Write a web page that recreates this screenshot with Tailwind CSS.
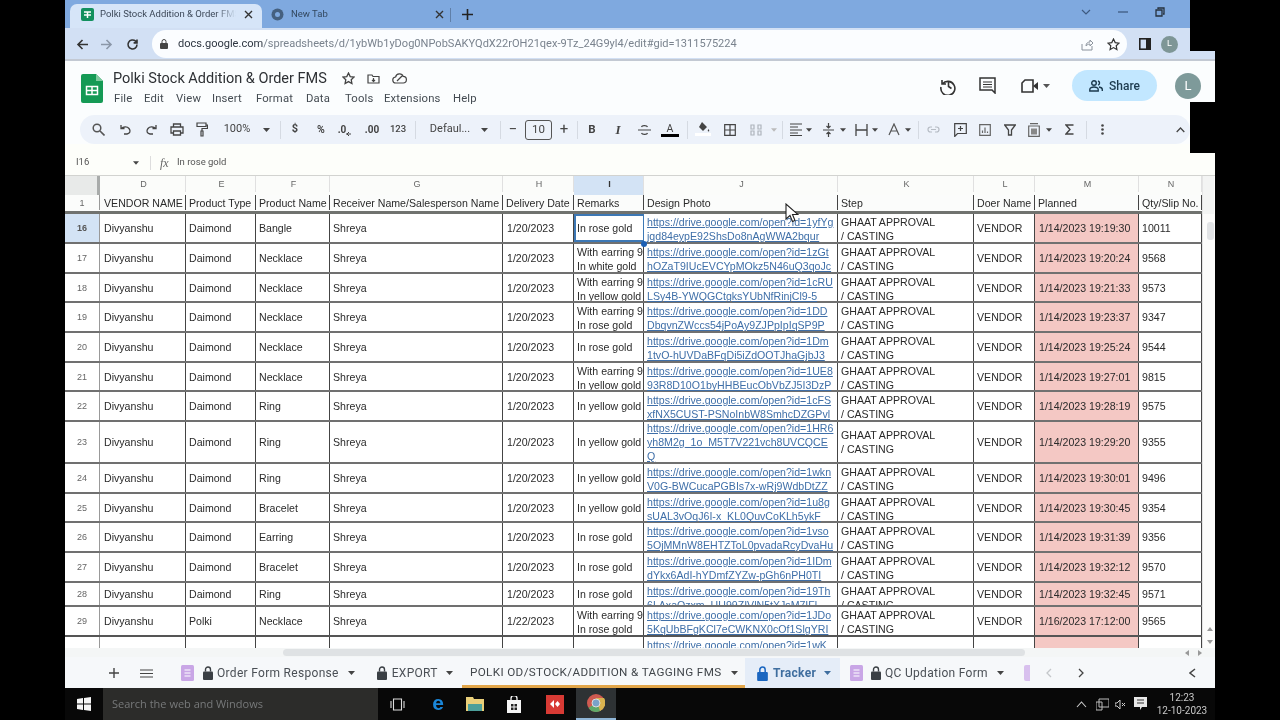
<!DOCTYPE html>
<html>
<head>
<meta charset="utf-8">
<script src="https://cdn.jsdelivr.net/npm/@tailwindcss/browser@4"></script>
</head>
<body class="bg-black">
<div class="relative w-[1280px] h-[720px] overflow-hidden bg-black font-['Liberation_Sans',sans-serif] blur-[0.6px]">
<div class="ml-[65px] w-[1150px] h-[720px] flex flex-col bg-[#fbfdfe]">

  <!-- tab strip -->
  <div class="h-[28px] bg-[#7fa9df] flex items-end pl-[5px] shrink-0 font-['Roboto',sans-serif]">
    <div class="w-[192px] h-[24px] pb-[3px] bg-[#d6e5f8] rounded-t-[7px] flex items-center pl-[11px] text-[9.5px] text-[#3c4858]">
      <svg class="w-[13px] h-[13px] shrink-0" viewBox="0 0 13 13"><rect width="13" height="13" rx="2" fill="#12905e"/><path d="M3 4h7M3 7h7M6.5 4v6" stroke="#fff" stroke-width="1.5"/></svg>
      <span class="ml-[6px] w-[136px] whitespace-nowrap overflow-hidden [mask-image:linear-gradient(to_right,black_85%,transparent)]">Polki Stock Addition &amp; Order FMS</span>
      <svg class="w-[9px] h-[9px] ml-[8px]" viewBox="0 0 9 9"><path d="M1 1l7 7M8 1l-7 7" stroke="#333" stroke-width="1.4"/></svg>
    </div>
    <div class="w-[215px] h-[24px] pb-[3px] flex items-center pl-[9px] text-[9.5px] text-[#33485f]">
      <svg class="w-[13px] h-[13px] shrink-0" viewBox="0 0 13 13"><circle cx="6.5" cy="6.5" r="6" fill="#45607f"/><circle cx="6.5" cy="6.5" r="2.5" fill="#7fa9df"/></svg>
      <span class="ml-[7px] w-[143px]">New Tab</span>
      <svg class="w-[9px] h-[9px] ml-[1px]" viewBox="0 0 9 9"><path d="M1 1l7 7M8 1l-7 7" stroke="#333" stroke-width="1.4"/></svg>
      <span class="w-px h-[14px] bg-[#5f7fa8] ml-[6px]"></span>
      <svg class="w-[11px] h-[11px] ml-[11px] shrink-0" viewBox="0 0 11 11"><path d="M5.500 0v11M0 5.500h11" stroke="#222" stroke-width="1.6"/></svg>
    </div>
    <div class="ml-auto mr-[50px] h-[28px] flex items-center gap-[27px] pb-[5px]">
      <svg class="w-[10px] h-[10px]" viewBox="0 0 10 10"><path d="M1 3l4 4 4-4" fill="none" stroke="#3e5a80" stroke-width="1.2"/></svg>
      <svg class="w-[10px] h-[10px]" viewBox="0 0 10 10"><path d="M0 5h10" stroke="#3e5a80" stroke-width="1.3"/></svg>
      <svg class="w-[10px] h-[10px]" viewBox="0 0 10 10"><path d="M3 2V1h6v6H8M1 3h6v6H1z" fill="none" stroke="#26303c" stroke-width="1.3"/></svg>
    </div>
  </div>

  <!-- address row -->
  <div class="h-[33px] pt-px bg-[#d2e0f4] border-b-2 border-[#c3c9d3] flex items-center pl-[11px] shrink-0">
    <svg class="w-[13px] h-[13px]" viewBox="0 0 13 13"><path d="M12 6.5H2M6.5 2L2 6.5 6.5 11" fill="none" stroke="#333" stroke-width="1.6"/></svg>
    <svg class="w-[13px] h-[13px] ml-[11px]" viewBox="0 0 13 13"><path d="M1 6.5h10M6.5 2L11 6.5 6.5 11" fill="none" stroke="#8b97a8" stroke-width="1.6"/></svg>
    <svg class="w-[13px] h-[13px] ml-[13px]" viewBox="0 0 13 13"><path d="M11 6.5A4.5 4.5 0 1 1 9.6 3.2L11 4.6M11 1.5v3.4H7.6" fill="none" stroke="#333" stroke-width="1.6"/></svg>
    <div class="ml-[13px] w-[975px] h-[28px] bg-[#fbfdff] rounded-full flex items-center pl-[8px] pr-[6px] font-['Roboto',sans-serif] text-[11.05px]">
      <svg class="w-[8px] h-[10px]" viewBox="0 0 8 10"><rect y="4" width="8" height="6" rx="1" fill="#444"/><path d="M2 4V2.5a2 2 0 0 1 4 0V4" fill="none" stroke="#444"/></svg>
      <span class="ml-[10px] text-[#2d3540]">docs.google.com<span class="text-[#7a838e]">/spreadsheets/d/1ybWb1yDog0NPobSAKYQdX22rOH21qex-9Tz_24G9yl4/edit#gid=1311575224</span></span>
      <svg class="w-[13px] h-[13px] ml-auto" viewBox="0 0 13 13"><path d="M1 6v6h10V8M5 8c0-3 2-4 4-4V2l3 3-3 3V6C7 6 6 7 5 8z" fill="none" stroke="#8a929c"/></svg>
      <svg class="w-[13px] h-[13px] ml-[13px] mr-[1px]" viewBox="0 0 13 13"><path d="M6.5 1l1.7 3.6 3.8.5-2.8 2.6.7 3.8-3.4-1.9-3.4 1.9.7-3.8L1 5.1l3.8-.5z" fill="none" stroke="#333" stroke-width="1.2"/></svg>
    </div>
    <svg class="w-[12px] h-[12px] ml-[12px]" viewBox="0 0 12 12"><rect x=".8" y=".8" width="10.4" height="10.4" fill="none" stroke="#222" stroke-width="1.6"/><rect x="7" y="1" width="4" height="10" fill="#222"/></svg>
    <div class="ml-[10px] w-[17px] h-[17px] rounded-full bg-[#7e9696] text-white text-[9px] flex items-center justify-center">L</div>
  </div>

  <!-- doc header -->
  <div class="h-[54px] flex items-center shrink-0 pl-[16px] font-['Roboto',sans-serif]">
    <svg class="w-[22px] h-[29px] shrink-0" viewBox="0 0 22 29"><path d="M2 0h13l7 7v20a2 2 0 0 1-2 2H2a2 2 0 0 1-2-2V2a2 2 0 0 1 2-2z" fill="#159a55"/><path d="M15 0l7 7h-7z" fill="#7fcb9f"/><rect x="5.5" y="12.5" width="11" height="8" fill="none" stroke="#fff" stroke-width="1.5"/><path d="M11 12.5v8M5.5 16.5h11" stroke="#fff" stroke-width="1.5"/></svg>
    <div class="ml-[10px] w-[340px]">
      <div class="flex items-center h-[20px] text-[14.5px] text-[#2d3034]">
        <span class="whitespace-nowrap w-[229px]">Polki Stock Addition &amp; Order FMS</span>
        <svg class="w-[13px] h-[13px]" viewBox="0 0 13 13"><path d="M6.5 1l1.7 3.6 3.8.5-2.8 2.6.7 3.8-3.4-1.9-3.4 1.9.7-3.8L1 5.1l3.8-.5z" fill="none" stroke="#444" stroke-width="1.3"/></svg>
        <svg class="w-[13px] h-[13px] ml-[12px]" viewBox="0 0 13 13"><path d="M1 3h4l1 1.5h6V11H1zM6.5 6v3.5M5 8l1.5 1.5L8 8" fill="none" stroke="#444" stroke-width="1.2"/></svg>
        <svg class="w-[15px] h-[13px] ml-[12px]" viewBox="0 0 15 13"><path d="M4 11a3 3 0 0 1-.4-6 4 4 0 0 1 7.6-.6A3.3 3.3 0 0 1 11 11zM5 9l5-5" fill="none" stroke="#444" stroke-width="1.2"/></svg>
      </div>
      <div class="mt-[2px] flex text-[11.3px] text-[#444b52] tracking-[0.15px] *:whitespace-nowrap *:shrink-0">
        <span class="w-[31px] pl-px">File</span><span class="w-[32px]">Edit</span><span class="w-[36px]">View</span><span class="w-[44px]">Insert</span><span class="w-[50px]">Format</span><span class="w-[39px]">Data</span><span class="w-[39px]">Tools</span><span class="w-[69px]">Extensions</span><span>Help</span>
      </div>
    </div>
    <div class="flex items-center mb-[5px]">
      <svg class="w-[18px] h-[18px] ml-[486px]" viewBox="0 0 18 18"><path d="M3 3v4h4M3.4 7A7 7 0 1 1 2 10" fill="none" stroke="#333" stroke-width="1.6"/><path d="M9.5 5v4.5l3 2" fill="none" stroke="#333" stroke-width="1.6"/></svg>
      <svg class="w-[17px] h-[17px] ml-[22px]" viewBox="0 0 17 17"><path d="M1 1h15v15l-3-3H1z" fill="none" stroke="#333" stroke-width="1.5"/><path d="M4 5h9M4 7.500h9M4 10h9" stroke="#333" stroke-width="1.200"/></svg>
      <svg class="w-[18px] h-[14px] ml-[25px]" viewBox="0 0 18 14"><path d="M2 3l2-2h8v12H1V4z" fill="none" stroke="#333" stroke-width="1.6"/><path d="M12 7l5-4v8z" fill="#333"/></svg>
      <svg class="w-[7px] h-[4px] ml-[4px]" viewBox="0 0 7 4"><path d="M0 0h7L3.500 4z" fill="#555"/></svg>
      <div class="ml-[22px] w-[85px] h-[31px] rounded-full bg-[#c2e7ff] flex items-center justify-center gap-[6px] text-[12px] font-medium text-[#1d3b4f]">
        <svg class="w-[14px] h-[12px]" viewBox="0 0 14 12"><circle cx="5" cy="3" r="2.300" fill="none" stroke="#1d3b4f" stroke-width="1.400"/><path d="M.8 11V9.500C.8 8 3 7 5 7s4.200 1 4.200 2.500V11zM9 1a2.200 2.200 0 0 1 0 4.200M10 7c2 .3 3.300 1.200 3.300 2.500V11" fill="none" stroke="#1d3b4f" stroke-width="1.400"/></svg>
        Share
      </div>
      <div class="ml-[18px] w-[26px] h-[26px] rounded-full bg-[#7e9a9a] text-white text-[13px] flex items-center justify-center">L</div>
    </div>
  </div>

  <!-- toolbar -->
  <div class="h-[29px] ml-[15px] w-[1110px] bg-[#edf2fa] rounded-full shrink-0 flex items-center pl-[5px] text-[#444] font-['Roboto',sans-serif] *:shrink-0 *:flex *:items-center *:justify-center">
    <div class="w-[26px]"><svg class="w-[13px] h-[13px]" viewBox="0 0 13 13"><circle cx="5" cy="5" r="3.800" fill="none" stroke="#555" stroke-width="1.500"/><path d="M8 8l4.500 4.500" stroke="#555" stroke-width="1.600"/></svg></div>
    <div class="w-[30px]"><svg class="w-[12px] h-[11px]" viewBox="0 0 12 11"><path d="M1 1v3.500h3.500M1.500 4.500C3 2.800 7 2 9 4.500s1 5-2 5.500H4" fill="none" stroke="#444" stroke-width="1.300"/></svg></div>
    <div class="w-[20px]"><svg class="w-[12px] h-[11px]" viewBox="0 0 12 11"><path d="M11 1v3.500H7.500M10.500 4.500C9 2.800 5 2 3 4.500s-1 5 2 5.500h3" fill="none" stroke="#444" stroke-width="1.300"/></svg></div>
    <div class="w-[32px]"><svg class="w-[14px] h-[13px]" viewBox="0 0 14 13"><path d="M3.500 4V1h7v3M3.500 10H1V4h12v6h-2.500M3.500 8h7v4h-7z" fill="none" stroke="#444" stroke-width="1.300"/></svg></div>
    <div class="w-[18px]"><svg class="w-[12px] h-[15px]" viewBox="0 0 12 15"><path d="M1 1h9v3.500H1zM10 3h1.500v3.500H6V9M5 9h2v5H5z" fill="none" stroke="#444" stroke-width="1.200"/></svg></div>
    <div class="w-[30px] ml-[11px] text-[11px]">100%</div>
    <div class="w-[28px]"><svg class="w-[7px] h-[4px]" viewBox="0 0 7 4"><path d="M0 0h7L3.500 4z" fill="#444"/></svg></div>
    <div class="w-px h-[18px] bg-[#d5dae2]"></div>
    <div class="w-[28px] text-[11px] font-bold">$</div>
    <div class="w-[24px] text-[10.500px] font-bold">%</div>
    <div class="w-[24px] text-[10px] font-bold">.0<svg class="w-[6px] h-[6px] mt-[8px]" viewBox="0 0 6 6"><path d="M0 3h5M3 1L1 3l2 2" fill="none" stroke="#444"/></svg></div>
    <div class="w-[30px] text-[10px] font-bold">.00</div>
    <div class="w-[22px] text-[9.500px] font-medium">123</div>
    <div class="w-[6px]"></div>
    <div class="w-px h-[18px] bg-[#d5dae2]"></div>
    <div class="w-[44px] ml-[12px] text-[11px] whitespace-nowrap">Defaul...</div>
    <div class="w-[24px]"><svg class="w-[7px] h-[4px]" viewBox="0 0 7 4"><path d="M0 0h7L3.500 4z" fill="#444"/></svg></div>
    <div class="w-[4px]"></div>
    <div class="w-px h-[18px] bg-[#d5dae2]"></div>
    <div class="w-[24px] text-[15px]">−</div>
    <div class="w-[27px] h-[20px] border border-[#555] rounded-[3px] text-[11.500px]">10</div>
    <div class="w-[24px] text-[15px]">+</div>
    <div class="w-px h-[18px] ml-px bg-[#d5dae2]"></div>
    <div class="w-[28px] text-[11.500px] font-bold">B</div>
    <div class="w-[24px] text-[13px] italic font-['Liberation_Serif',serif] font-bold">I</div>
    <div class="w-[28px]"><svg class="w-[13px] h-[12px]" viewBox="0 0 13 12"><path d="M0 6h13M9.500 3c-.5-1.500-5.500-2-6 0M3.500 9c.5 1.500 5.500 2 6 0" fill="none" stroke="#444" stroke-width="1.200"/></svg></div>
    <div class="w-[24px] flex-col"><span class="text-[10.500px] leading-[11px]">A</span><span class="w-[18px] h-[3px] bg-black"></span></div>
    <div class="w-[5px]"></div>
    <div class="w-px h-[18px] bg-[#d5dae2]"></div>
    <div class="w-[30px] flex-col -mt-[3px]"><svg class="w-[13px] h-[12px]" viewBox="0 0 13 12"><path d="M5 1l5 5-4 4-4-4zM11.500 8c1 1.500 1 2.500 0 2.500s-1-1 0-2.500z" fill="#444"/></svg><span class="w-[16px] h-[3px] bg-white"></span></div>
    <div class="w-[24px]"><svg class="w-[12px] h-[12px]" viewBox="0 0 12 12"><path d="M.7.700h10.600v10.600H.7zM6 .7v10.600M.7 6h10.600" fill="none" stroke="#444" stroke-width="1.200"/></svg></div>
    <div class="w-[28px]"><svg class="w-[12px] h-[12px]" viewBox="0 0 12 12"><path d="M1 1h3v4H1zM8 1h3v4H8zM1 7h3v4H1zM8 7h3v4H8z" fill="none" stroke="#aeb4bc" stroke-width="1.200"/></svg></div>
    <div class="w-[8px]"><svg class="w-[6px] h-[4px]" viewBox="0 0 7 4"><path d="M0 0h7L3.500 4z" fill="#bbb"/></svg></div>
    <div class="w-[4px]"></div>
    <div class="w-px h-[18px] bg-[#d5dae2]"></div>
    <div class="w-[20px] ml-[3px]"><svg class="w-[12px] h-[13px]" viewBox="0 0 12 13"><path d="M0 1h12M0 4h8M0 7h12M0 10h8M0 12.500h12" stroke="#444" stroke-width="1.200"/></svg></div>
    <div class="w-[6px]"><svg class="w-[6px] h-[4px]" viewBox="0 0 7 4"><path d="M0 0h7L3.500 4z" fill="#444"/></svg></div>
    <div class="w-[20px] ml-[6px]"><svg class="w-[11px] h-[14px]" viewBox="0 0 11 14"><path d="M0 7h11M5.500 0v4.500M3.500 3l2 2 2-2M5.500 14V9.500M3.500 11l2-2 2 2" fill="none" stroke="#444" stroke-width="1.200"/></svg></div>
    <div class="w-[10px]"><svg class="w-[6px] h-[4px]" viewBox="0 0 7 4"><path d="M0 0h7L3.500 4z" fill="#444"/></svg></div>
    <div class="w-[20px] ml-[3px]"><svg class="w-[13px] h-[12px]" viewBox="0 0 13 12"><path d="M1 0v12M12 0v12M1 6h11" fill="none" stroke="#444" stroke-width="1.300"/></svg></div>
    <div class="w-[8px]"><svg class="w-[6px] h-[4px]" viewBox="0 0 7 4"><path d="M0 0h7L3.500 4z" fill="#444"/></svg></div>
    <div class="w-[20px] ml-[5px]"><svg class="w-[12px] h-[13px]" viewBox="0 0 12 13"><path d="M1 12L6 1l5 11M3 8h6" fill="none" stroke="#555" stroke-width="1.200"/></svg></div>
    <div class="w-[8px]"><svg class="w-[6px] h-[4px]" viewBox="0 0 7 4"><path d="M0 0h7L3.500 4z" fill="#444"/></svg></div>
    <div class="w-[6px]"></div>
    <div class="w-px h-[18px] bg-[#d5dae2]"></div>
    <div class="w-[28px]"><svg class="w-[13px] h-[7px]" viewBox="0 0 13 7"><path d="M5 1H3.500a2.500 2.500 0 0 0 0 5H5M8 1h1.500a2.500 2.500 0 0 1 0 5H8M4 3.500h5" fill="none" stroke="#b6bcc4" stroke-width="1.200"/></svg></div>
    <div class="w-[26px]"><svg class="w-[13px] h-[14px]" viewBox="0 0 13 14"><path d="M.7.700h11.600v9.800H3.500L.7 13.500zM6.500 3v5M4 5.500h5" fill="none" stroke="#444" stroke-width="1.200"/></svg></div>
    <div class="w-[24px]"><svg class="w-[12px] h-[12px]" viewBox="0 0 12 12"><path d="M.7.700h10.600v10.600H.7zM3.500 9V6.500M6 9V3.500M8.500 9V7.500" fill="none" stroke="#666" stroke-width="1.200"/></svg></div>
    <div class="w-[26px]"><svg class="w-[12px] h-[12px]" viewBox="0 0 12 12"><path d="M.7 1h10.600L7.500 6v5h-3V6z" fill="none" stroke="#444" stroke-width="1.300"/></svg></div>
    <div class="w-[22px]"><svg class="w-[12px] h-[14px]" viewBox="0 0 12 14"><path d="M2 .7h8M.7 3h10.600v10.300H.7z" fill="none" stroke="#666" stroke-width="1.200"/><path d="M3 5.500h6v6H3z" fill="#888"/></svg></div>
    <div class="w-[8px]"><svg class="w-[6px] h-[4px]" viewBox="0 0 7 4"><path d="M0 0h7L3.500 4z" fill="#444"/></svg></div>
    <div class="w-[33px]"><svg class="w-[9px] h-[11px]" viewBox="0 0 9 11"><path d="M8.500 1H1l4 4.500L1 10h7.500" fill="none" stroke="#444" stroke-width="1.400"/></svg></div>
    <div class="w-px h-[18px] bg-[#d5dae2]"></div>
    <div class="w-[30px]"><svg class="w-[3px] h-[11px]" viewBox="0 0 3 11"><circle cx="1.500" cy="1.500" r="1.300" fill="#444"/><circle cx="1.500" cy="5.500" r="1.300" fill="#444"/><circle cx="1.500" cy="9.500" r="1.300" fill="#444"/></svg></div>
    <div class="w-[20px] ml-auto"><svg class="w-[9px] h-[6px]" viewBox="0 0 9 6"><path d="M.7 5L4.500 1 8.300 5" fill="none" stroke="#444" stroke-width="1.300"/></svg></div>
  </div>

  <!-- formula bar -->
  <div class="h-[32px] pt-[6px] bg-[#fdfefa] border-b border-[#d2d3d0] flex items-center pl-[11px] shrink-0 font-['Roboto',sans-serif] text-[9.500px] text-[#555]">
    <span class="w-[57px]">I16</span>
    <svg class="w-[6px] h-[4px]" viewBox="0 0 7 4"><path d="M0 0h7L3.500 4z" fill="#444"/></svg>
    <span class="w-px h-[14px] bg-[#ddd] ml-[11px]"></span>
    <span class="ml-[9px] italic font-['Liberation_Serif',serif] text-[12px] text-[#666] w-[17px]">fx</span>
    <span>In rose gold</span>
  </div>

  <!-- sheet grid -->
  <div class="relative h-[472px] shrink-0 overflow-hidden flex bg-white text-[10.600px] leading-[14px] text-[#2a2a2a] whitespace-nowrap">
    <div class="w-[1137px] shrink-0">
      <div class="grid grid-cols-[35px_86px_70px_74px_173px_71px_70px_194px_136px_61px_104px_63px] h-[19px] pb-[3px] bg-[#fbfcfa] text-[9px] text-[#666] *:flex *:items-center *:justify-center *:pl-[2px] *:border-r *:border-[#e0e0e0]">
        <div class="bg-[#e8eae9] border-r-[3px]! border-[#a8abaa]! -mb-[3px]"></div><div>D</div><div>E</div><div>F</div><div>G</div><div>H</div><div class="bg-[#d3e3f5] font-bold text-[#333] -mb-[3px] pb-[3px]">I</div><div>J</div><div>K</div><div>L</div><div>M</div><div>N</div>
      </div>
      <div class="grid grid-cols-[35px_86px_70px_74px_173px_71px_70px_194px_136px_61px_104px_63px] grid-rows-[minmax(0,1fr)] h-[19px] pb-px bg-[#fbfcfb] border-b-[3px] border-[#70726f] *:flex *:items-center *:px-[3px] *:border-r *:border-[#444]">
        <div class="justify-center text-[9px] text-[#666] border-r-[#999]!">1</div><div class="pl-[4px]!">VENDOR NAME</div><div>Product Type</div><div>Product Name</div><div>Receiver Name/Salesperson Name</div><div>Delivery Date</div><div>Remarks</div><div>Design Photo</div><div>Step</div><div>Doer Name</div><div>Planned</div><div>Qty/Slip No.</div>
      </div>

      <div class="grid grid-cols-[35px_86px_70px_74px_173px_71px_70px_194px_136px_61px_104px_63px] grid-rows-[minmax(0,1fr)] h-[30px] border-b-2 border-[#707070] *:flex *:items-center *:px-[3px] *:border-r *:border-[#444] [&>div:has(br)]:pt-[2px]">
        <div class="justify-center text-[9px] font-bold text-[#555] bg-[#d3e3f5] border-r-[#999]!">16</div><div class="pl-[4px]!">Divyanshu</div><div>Daimond</div><div>Bangle</div><div>Shreya</div><div class="pl-[4px]!">1/20/2023</div><div class="border-2 border-[#3d78b5]! px-[1px]!">In rose gold</div><div class="text-[#3f6fa8] underline"><span>https://drive.google.com/open?id=1yfYg<br>jqd84eypE92ShsDo8nAgWWA2bqur</span></div><div>GHAAT APPROVAL<br>/ CASTING</div><div>VENDOR</div><div class="bg-[#f4c8c4] pl-[4px]!">1/14/2023 19:19:30</div><div>10011</div>
      </div>
      <div class="grid grid-cols-[35px_86px_70px_74px_173px_71px_70px_194px_136px_61px_104px_63px] grid-rows-[minmax(0,1fr)] h-[30px] border-b-2 border-[#707070] *:flex *:items-center *:px-[3px] *:border-r *:border-[#444] [&>div:has(br)]:pt-[2px]">
        <div class="justify-center text-[9px] text-[#666] border-r-[#999]!">17</div><div class="pl-[4px]!">Divyanshu</div><div>Daimond</div><div>Necklace</div><div>Shreya</div><div class="pl-[4px]!">1/20/2023</div><div class="overflow-hidden"><span>With earring 9<br>In white gold</span></div><div class="text-[#3f6fa8] underline"><span>https://drive.google.com/open?id=1zGt<br>hOZaT9IUcEVCYpMOkz5N46uQ3qoJc</span></div><div>GHAAT APPROVAL<br>/ CASTING</div><div>VENDOR</div><div class="bg-[#f4c8c4] pl-[4px]!">1/14/2023 19:20:24</div><div>9568</div>
      </div>
      <div class="grid grid-cols-[35px_86px_70px_74px_173px_71px_70px_194px_136px_61px_104px_63px] grid-rows-[minmax(0,1fr)] h-[29px] border-b-2 border-[#707070] *:flex *:items-center *:px-[3px] *:border-r *:border-[#444] [&>div:has(br)]:pt-[2px]">
        <div class="justify-center text-[9px] text-[#666] border-r-[#999]!">18</div><div class="pl-[4px]!">Divyanshu</div><div>Daimond</div><div>Necklace</div><div>Shreya</div><div class="pl-[4px]!">1/20/2023</div><div class="overflow-hidden"><span>With earring 9<br>In yellow gold</span></div><div class="text-[#3f6fa8] underline"><span>https://drive.google.com/open?id=1cRU<br>LSy4B-YWQGCtgksYUbNfRinjCl9-5</span></div><div>GHAAT APPROVAL<br>/ CASTING</div><div>VENDOR</div><div class="bg-[#f4c8c4] pl-[4px]!">1/14/2023 19:21:33</div><div>9573</div>
      </div>
      <div class="grid grid-cols-[35px_86px_70px_74px_173px_71px_70px_194px_136px_61px_104px_63px] grid-rows-[minmax(0,1fr)] h-[30px] border-b-2 border-[#707070] *:flex *:items-center *:px-[3px] *:border-r *:border-[#444] [&>div:has(br)]:pt-[2px]">
        <div class="justify-center text-[9px] text-[#666] border-r-[#999]!">19</div><div class="pl-[4px]!">Divyanshu</div><div>Daimond</div><div>Necklace</div><div>Shreya</div><div class="pl-[4px]!">1/20/2023</div><div class="overflow-hidden"><span>With earring 9<br>In rose gold</span></div><div class="text-[#3f6fa8] underline"><span>https://drive.google.com/open?id=1DD<br>DbqvnZWccs54jPoAy9ZJPpIpIqSP9P</span></div><div>GHAAT APPROVAL<br>/ CASTING</div><div>VENDOR</div><div class="bg-[#f4c8c4] pl-[4px]!">1/14/2023 19:23:37</div><div>9347</div>
      </div>
      <div class="grid grid-cols-[35px_86px_70px_74px_173px_71px_70px_194px_136px_61px_104px_63px] grid-rows-[minmax(0,1fr)] h-[30px] border-b-2 border-[#707070] *:flex *:items-center *:px-[3px] *:border-r *:border-[#444] [&>div:has(br)]:pt-[2px]">
        <div class="justify-center text-[9px] text-[#666] border-r-[#999]!">20</div><div class="pl-[4px]!">Divyanshu</div><div>Daimond</div><div>Necklace</div><div>Shreya</div><div class="pl-[4px]!">1/20/2023</div><div>In rose gold</div><div class="text-[#3f6fa8] underline"><span>https://drive.google.com/open?id=1Dm<br>1tvO-hUVDaBFqDi5iZdOOTJhaGjbJ3</span></div><div>GHAAT APPROVAL<br>/ CASTING</div><div>VENDOR</div><div class="bg-[#f4c8c4] pl-[4px]!">1/14/2023 19:25:24</div><div>9544</div>
      </div>
      <div class="grid grid-cols-[35px_86px_70px_74px_173px_71px_70px_194px_136px_61px_104px_63px] grid-rows-[minmax(0,1fr)] h-[29px] border-b-2 border-[#707070] *:flex *:items-center *:px-[3px] *:border-r *:border-[#444] [&>div:has(br)]:pt-[2px]">
        <div class="justify-center text-[9px] text-[#666] border-r-[#999]!">21</div><div class="pl-[4px]!">Divyanshu</div><div>Daimond</div><div>Necklace</div><div>Shreya</div><div class="pl-[4px]!">1/20/2023</div><div class="overflow-hidden"><span>With earring 9<br>In yellow gold</span></div><div class="text-[#3f6fa8] underline"><span>https://drive.google.com/open?id=1UE8<br>93R8D10O1byHHBEucObVbZJ5I3DzP</span></div><div>GHAAT APPROVAL<br>/ CASTING</div><div>VENDOR</div><div class="bg-[#f4c8c4] pl-[4px]!">1/14/2023 19:27:01</div><div>9815</div>
      </div>
      <div class="grid grid-cols-[35px_86px_70px_74px_173px_71px_70px_194px_136px_61px_104px_63px] grid-rows-[minmax(0,1fr)] h-[30px] border-b-2 border-[#707070] *:flex *:items-center *:px-[3px] *:border-r *:border-[#444] [&>div:has(br)]:pt-[2px]">
        <div class="justify-center text-[9px] text-[#666] border-r-[#999]!">22</div><div class="pl-[4px]!">Divyanshu</div><div>Daimond</div><div>Ring</div><div>Shreya</div><div class="pl-[4px]!">1/20/2023</div><div>In yellow gold</div><div class="text-[#3f6fa8] underline"><span>https://drive.google.com/open?id=1cFS<br>xfNX5CUST-PSNoInbW8SmhcDZGPvl</span></div><div>GHAAT APPROVAL<br>/ CASTING</div><div>VENDOR</div><div class="bg-[#f4c8c4] pl-[4px]!">1/14/2023 19:28:19</div><div>9575</div>
      </div>
      <div class="grid grid-cols-[35px_86px_70px_74px_173px_71px_70px_194px_136px_61px_104px_63px] grid-rows-[minmax(0,1fr)] h-[42px] border-b-2 border-[#707070] *:flex *:items-center *:px-[3px] *:border-r *:border-[#444]">
        <div class="justify-center text-[9px] text-[#666] border-r-[#999]!">23</div><div class="pl-[4px]!">Divyanshu</div><div>Daimond</div><div>Ring</div><div>Shreya</div><div class="pl-[4px]!">1/20/2023</div><div>In yellow gold</div><div class="text-[#3f6fa8] underline"><span>https://drive.google.com/open?id=1HR6<br>yh8M2g_1o_M5T7V221vch8UVCQCE<br>Q</span></div><div>GHAAT APPROVAL<br>/ CASTING</div><div>VENDOR</div><div class="bg-[#f4c8c4] pl-[4px]!">1/14/2023 19:29:20</div><div>9355</div>
      </div>
      <div class="grid grid-cols-[35px_86px_70px_74px_173px_71px_70px_194px_136px_61px_104px_63px] grid-rows-[minmax(0,1fr)] h-[30px] border-b-2 border-[#707070] *:flex *:items-center *:px-[3px] *:border-r *:border-[#444] [&>div:has(br)]:pt-[2px]">
        <div class="justify-center text-[9px] text-[#666] border-r-[#999]!">24</div><div class="pl-[4px]!">Divyanshu</div><div>Daimond</div><div>Ring</div><div>Shreya</div><div class="pl-[4px]!">1/20/2023</div><div>In yellow gold</div><div class="text-[#3f6fa8] underline"><span>https://drive.google.com/open?id=1wkn<br>V0G-BWCucaPGBIs7x-wRj9WdbDtZZ</span></div><div>GHAAT APPROVAL<br>/ CASTING</div><div>VENDOR</div><div class="bg-[#f4c8c4] pl-[4px]!">1/14/2023 19:30:01</div><div>9496</div>
      </div>
      <div class="grid grid-cols-[35px_86px_70px_74px_173px_71px_70px_194px_136px_61px_104px_63px] grid-rows-[minmax(0,1fr)] h-[29px] border-b-2 border-[#707070] *:flex *:items-center *:px-[3px] *:border-r *:border-[#444] [&>div:has(br)]:pt-[2px]">
        <div class="justify-center text-[9px] text-[#666] border-r-[#999]!">25</div><div class="pl-[4px]!">Divyanshu</div><div>Daimond</div><div>Bracelet</div><div>Shreya</div><div class="pl-[4px]!">1/20/2023</div><div>In yellow gold</div><div class="text-[#3f6fa8] underline"><span>https://drive.google.com/open?id=1u8g<br>sUAL3vOqJ6I-x_KL0QuvCoKLh5ykF</span></div><div>GHAAT APPROVAL<br>/ CASTING</div><div>VENDOR</div><div class="bg-[#f4c8c4] pl-[4px]!">1/14/2023 19:30:45</div><div>9354</div>
      </div>
      <div class="grid grid-cols-[35px_86px_70px_74px_173px_71px_70px_194px_136px_61px_104px_63px] grid-rows-[minmax(0,1fr)] h-[30px] border-b-2 border-[#707070] *:flex *:items-center *:px-[3px] *:border-r *:border-[#444] [&>div:has(br)]:pt-[2px]">
        <div class="justify-center text-[9px] text-[#666] border-r-[#999]!">26</div><div class="pl-[4px]!">Divyanshu</div><div>Daimond</div><div>Earring</div><div>Shreya</div><div class="pl-[4px]!">1/20/2023</div><div>In rose gold</div><div class="text-[#3f6fa8] underline"><span>https://drive.google.com/open?id=1vso<br>5OjMMnW8EHTZToL0pvadaRcyDvaHu</span></div><div>GHAAT APPROVAL<br>/ CASTING</div><div>VENDOR</div><div class="bg-[#f4c8c4] pl-[4px]!">1/14/2023 19:31:39</div><div>9356</div>
      </div>
      <div class="grid grid-cols-[35px_86px_70px_74px_173px_71px_70px_194px_136px_61px_104px_63px] grid-rows-[minmax(0,1fr)] h-[30px] border-b-2 border-[#707070] *:flex *:items-center *:px-[3px] *:border-r *:border-[#444] [&>div:has(br)]:pt-[2px]">
        <div class="justify-center text-[9px] text-[#666] border-r-[#999]!">27</div><div class="pl-[4px]!">Divyanshu</div><div>Daimond</div><div>Bracelet</div><div>Shreya</div><div class="pl-[4px]!">1/20/2023</div><div>In rose gold</div><div class="text-[#3f6fa8] underline"><span>https://drive.google.com/open?id=1IDm<br>dYkx6AdI-hYDmfZYZw-pGh6nPH0TI</span></div><div>GHAAT APPROVAL<br>/ CASTING</div><div>VENDOR</div><div class="bg-[#f4c8c4] pl-[4px]!">1/14/2023 19:32:12</div><div>9570</div>
      </div>
      <div class="grid grid-cols-[35px_86px_70px_74px_173px_71px_70px_194px_136px_61px_104px_63px] grid-rows-[minmax(0,1fr)] h-[24px] border-b-2 border-[#707070] *:flex *:items-center *:px-[3px] *:border-r *:border-[#444] *:overflow-hidden">
        <div class="justify-center text-[9px] text-[#666] border-r-[#999]!">28</div><div class="pl-[4px]!">Divyanshu</div><div>Daimond</div><div>Ring</div><div>Shreya</div><div class="pl-[4px]!">1/20/2023</div><div>In rose gold</div><div class="text-[#3f6fa8] underline items-start!"><span class="pt-px">https://drive.google.com/open?id=19Th<br>6LAxaQzxm_HU99ZIVlN5tXJsM7IFl</span></div><div class="items-start!"><span class="pt-px">GHAAT APPROVAL<br>/ CASTING</span></div><div>VENDOR</div><div class="bg-[#f4c8c4] pl-[4px]!">1/14/2023 19:32:45</div><div>9571</div>
      </div>
      <div class="grid grid-cols-[35px_86px_70px_74px_173px_71px_70px_194px_136px_61px_104px_63px] grid-rows-[minmax(0,1fr)] h-[30px] border-b-2 border-[#555] *:flex *:items-center *:px-[3px] *:border-r *:border-[#444] [&>div:has(br)]:pt-[2px]">
        <div class="justify-center text-[9px] text-[#666] border-r-[#999]!">29</div><div class="pl-[4px]!">Divyanshu</div><div>Polki</div><div>Necklace</div><div>Shreya</div><div class="pl-[4px]!">1/22/2023</div><div class="overflow-hidden"><span>With earring 9<br>In rose gold</span></div><div class="text-[#3f6fa8] underline"><span>https://drive.google.com/open?id=1JDo<br>5KqUbBFgKCl7eCWKNX0cOf1SlgYRI</span></div><div>GHAAT APPROVAL<br>/ CASTING</div><div>VENDOR</div><div class="bg-[#f4c8c4] pl-[4px]!">1/16/2023 17:12:00</div><div>9565</div>
      </div>
      <div class="grid grid-cols-[35px_86px_70px_74px_173px_71px_70px_194px_136px_61px_104px_63px] h-[38px] *:flex *:items-center *:px-[3px] *:border-r *:border-[#444]">
        <div class="border-r-[#999]!"></div><div></div><div></div><div></div><div></div><div></div><div></div><div class="text-[#3f6fa8] underline items-start!"><span class="pt-px">https://drive.google.com/open?id=1wK</span></div><div class="pt-[12px]">GHAAT APPROVAL</div><div></div><div class="bg-[#f4c8c4]"></div><div></div>
      </div>
    </div>

    <!-- vertical scrollbar -->
    <div class="w-[13px] bg-[#fcfcfb] border-l border-[#e4e4e4] flex flex-col items-end pr-px">
      <div class="w-full h-[38px] bg-[#f3f4f3]"></div>
      <div class="mt-[8px] w-[7px] h-[18px] rounded-[3px] bg-[#e1e3e5]"></div>
      <svg class="w-[6px] h-[4px] mt-[387px] mr-[1px]" viewBox="0 0 6 4"><path d="M0 4h6L3 0z" fill="#999"/></svg>
      <svg class="w-[6px] h-[4px] mt-[9px] mr-[1px]" viewBox="0 0 6 4"><path d="M0 0h6L3 4z" fill="#999"/></svg>
    </div>

    <!-- fill handle -->
    <div class="absolute left-[576px] top-[65px] w-[6px] h-[6px] rounded-full bg-[#1c5fb4]"></div>
    <!-- mouse pointer -->
    <svg class="absolute left-[720px] top-[27px] w-[14px] h-[20px]" viewBox="0 0 14 20"><path d="M1 1v15l4-3.500 2.500 6 2.500-1-2.500-6H13z" fill="#fff" stroke="#222" stroke-width="1.100"/></svg>
  </div>

  <!-- horizontal scrollbar -->
  <div class="h-[9px] bg-[#f4f6f6] shrink-0 flex items-center pl-[218px] relative">
    <div class="w-[742px] h-[7px] rounded-full bg-[#dfe2e4]"></div>
    <svg class="ml-auto mr-[9px] w-[4px] h-[6px]" viewBox="0 0 4 6"><path d="M4 0v6L0 3z" fill="#999"/></svg>
    <svg class="mr-[13px] w-[4px] h-[6px]" viewBox="0 0 4 6"><path d="M0 0v6l4-3z" fill="#999"/></svg>
  </div>

  <!-- sheet tabs -->
  <div class="h-[31px] pt-px bg-[#f6f8fa] shrink-0 flex items-stretch font-['Roboto',sans-serif] text-[12px] tracking-[0.3px] text-[#4a4f55] whitespace-nowrap *:flex *:items-center *:shrink-0">
    <div class="w-[98px] pl-[44px]"><svg class="w-[10px] h-[10px]" viewBox="0 0 10 10"><path d="M5 0v10M0 5h10" stroke="#444" stroke-width="1.400"/></svg><svg class="w-[13px] h-[9px] ml-[21px]" viewBox="0 0 13 9"><path d="M0 1h13M0 4.500h13M0 8h13" stroke="#444" stroke-width="1.200"/></svg></div>
    <div class="w-[18px]"></div>
    <div class="w-[281px] pl-0">
      <svg class="w-[13px] h-[16px]" viewBox="0 0 13 16"><rect width="13" height="16" rx="1.500" fill="#c9a6e6"/><path d="M3.500 5h6M3.500 8h6M3.500 11h6" stroke="#fff" stroke-width="1.200"/></svg>
      <svg class="w-[10px] h-[14px] ml-[9px]" viewBox="0 0 10 14"><rect y="5.500" width="10" height="8.500" rx="1" fill="#3a3f44"/><path d="M2.500 5.500V3.500a2.500 2.500 0 0 1 5 0v2" fill="none" stroke="#3a3f44" stroke-width="1.400"/></svg>
      <span class="ml-[4px]">Order Form Response</span>
      <svg class="w-[7px] h-[4px] ml-[9px]" viewBox="0 0 7 4"><path d="M0 0h7L3.500 4z" fill="#444"/></svg>
      <svg class="w-[10px] h-[14px] ml-[22px]" viewBox="0 0 10 14"><rect y="5.500" width="10" height="8.500" rx="1" fill="#3a3f44"/><path d="M2.500 5.500V3.500a2.500 2.500 0 0 1 5 0v2" fill="none" stroke="#3a3f44" stroke-width="1.400"/></svg>
      <span class="ml-[5px]">EXPORT</span>
      <svg class="w-[7px] h-[4px] ml-[8px]" viewBox="0 0 7 4"><path d="M0 0h7L3.500 4z" fill="#444"/></svg>
    </div>
    <div class="w-[283px] pl-[8px] pt-[3px] border-b-[3px] border-[#e2a64a] text-[#41464b]">
      <span class="tracking-[0.35px] text-[11.700px]">POLKI OD/STOCK/ADDITION &amp; TAGGING FMS</span>
      <svg class="w-[7px] h-[4px] ml-[9px]" viewBox="0 0 7 4"><path d="M0 0h7L3.500 4z" fill="#444"/></svg>
    </div>
    <div class="w-[95px] pl-[12px] bg-[#e5edf8] font-bold text-[#3f6e9f]">
      <svg class="w-[11px] h-[15px]" viewBox="0 0 10 14"><rect y="5.500" width="10" height="8.500" rx="1" fill="#1a66c0"/><path d="M2.500 5.500V3.500a2.500 2.500 0 0 1 5 0v2" fill="none" stroke="#1a66c0" stroke-width="1.400"/></svg>
      <span class="ml-[5px]">Tracker</span>
      <svg class="w-[7px] h-[4px] ml-[8px]" viewBox="0 0 7 4"><path d="M0 0h7L3.500 4z" fill="#3f6e9f"/></svg>
    </div>
    <div class="w-[337px] pl-[10px]">
      <svg class="w-[13px] h-[16px]" viewBox="0 0 13 16"><rect width="13" height="16" rx="1.500" fill="#c9a6e6"/><path d="M3.500 5h6M3.500 8h6M3.500 11h6" stroke="#fff" stroke-width="1.200"/></svg>
      <svg class="w-[10px] h-[14px] ml-[8px]" viewBox="0 0 10 14"><rect y="5.500" width="10" height="8.500" rx="1" fill="#3a3f44"/><path d="M2.500 5.500V3.500a2.500 2.500 0 0 1 5 0v2" fill="none" stroke="#3a3f44" stroke-width="1.400"/></svg>
      <span class="ml-[4px]">QC Updation Form</span>
      <svg class="w-[7px] h-[4px] ml-[9px]" viewBox="0 0 7 4"><path d="M0 0h7L3.500 4z" fill="#444"/></svg>
      <span class="ml-[20px] w-[6px] h-[16px] bg-[#d8c0ee] rounded-l-[2px]"></span>
      <svg class="w-[6px] h-[10px] ml-[16px]" viewBox="0 0 6 10"><path d="M5 1L1 5l4 4" fill="none" stroke="#c4c7ca" stroke-width="1.300"/></svg>
      <svg class="w-[6px] h-[10px] ml-[26px]" viewBox="0 0 6 10"><path d="M1 1l4 4-4 4" fill="none" stroke="#444" stroke-width="1.300"/></svg>
    </div>
    <div class="w-[40px] pl-[12px]"><svg class="w-[7px] h-[10px]" viewBox="0 0 7 10"><path d="M6 1L1 5l5 4" fill="none" stroke="#444" stroke-width="1.500"/></svg></div>
  </div>

  <!-- taskbar -->
  <div class="h-[32px] bg-[#080808] shrink-0 flex items-center text-white">
    <div class="w-[38px] flex justify-center"><svg class="w-[14px] h-[14px]" viewBox="0 0 14 14"><path d="M0 2l6-1v5.500H0zM7 1l7-1v6.500H7zM0 7.500h6V13l-6-1zM7 7.500h7V14l-7-1z" fill="#f5f5f5"/></svg></div>
    <div class="w-[275px] h-[32px] bg-[#2c2c2a] flex items-center pl-[9px] font-['Open_Sans',sans-serif] text-[11px] text-[#77797a]">Search the web and Windows</div>
    <svg class="ml-[12px] w-[15px] h-[13px]" viewBox="0 0 15 13"><path d="M3.500 1h8v11h-8zM1 3v7M14 3v7" fill="none" stroke="#ddd" stroke-width="1.100"/></svg>
    <div class="ml-[23px] w-[20px] h-[20px] text-[21px] leading-[18px] font-bold text-[#1a86d8] text-center font-['Liberation_Sans',sans-serif]">e</div>
    <svg class="ml-[18px] w-[18px] h-[14px]" viewBox="0 0 18 14"><path d="M0 0h7l1 2h10v12H0z" fill="#e9cf7a"/><rect x="2" y="7" width="14" height="7" fill="#4c9f9a"/></svg>
    <svg class="ml-[23px] w-[14px] h-[17px]" viewBox="0 0 14 17"><path d="M0 4h14v13H0z" fill="#f5f5f5"/><path d="M4 5V2.500a3 3 0 0 1 6 0V5" fill="none" stroke="#f5f5f5" stroke-width="1.300"/><path d="M4 8h2.500v2.500H4zM7.500 8H10v2.500H7.500zM4 11.500h2.500V14H4zM7.500 11.500H10V14H7.500z" fill="#222"/></svg>
    <div class="ml-[25px] w-[18px] h-[19px] bg-[#d83a34] flex items-center justify-center"><svg class="w-[10px] h-[8px]" viewBox="0 0 10 8"><path d="M0 4l4-4v8zM5 4l2.500-3L10 4 7.500 7z" fill="#fff"/></svg></div>
    <div class="ml-[12px] w-[40px] h-[32px] bg-[#2e3234] border-b-2 border-[#8fb5d6] flex items-center justify-center"><svg class="w-[18px] h-[18px]" viewBox="0 0 18 18"><circle cx="9" cy="9" r="9" fill="#cf5a50"/><path d="M9 9L1.500 14A9 9 0 0 0 14 16.500z" fill="#5fa868"/><path d="M9 4h8A9 9 0 0 1 13 17z" fill="#d9b24f"/><circle cx="9" cy="9" r="4" fill="#7aa2c9" stroke="#ddd"/></svg></div>
    <svg class="ml-[460px] w-[11px] h-[7px]" viewBox="0 0 11 7"><path d="M1 6l4.500-5L10 6" fill="none" stroke="#ccc" stroke-width="1.100"/></svg>
    <svg class="ml-[9px] w-[13px] h-[13px]" viewBox="0 0 13 13"><path d="M3 1h10v8H3zM0 4h6v8H0z" fill="none" stroke="#bbb"/></svg>
    <svg class="ml-[6px] w-[11px] h-[11px]" viewBox="0 0 11 11"><path d="M0 4h2l3-3v9L2 7H0zM7 4l3 3M10 4L7 7" fill="none" stroke="#ccc"/></svg>
    <svg class="ml-[8px] w-[13px] h-[14px]" viewBox="0 0 13 14"><path d="M0 0h13v10H8l-2 3v-3H0z" fill="#e8e8e8"/><path d="M3 3h7M3 6h7" stroke="#333"/></svg>
    <div class="ml-[5px] w-[60px] shrink-0 text-center whitespace-nowrap font-['Roboto',sans-serif] text-[10px] leading-[13px] text-[#c8c8c8]">12:23<br>12-10-2023</div>
  </div>
</div>

<!-- black blocks lying over the window -->
<div class="absolute left-[1190px] top-0 w-[25px] h-[51px] bg-black"></div>
<div class="absolute left-[1190px] top-[102px] w-[25px] h-[51px] bg-black"></div>
</div>
</body>
</html>
